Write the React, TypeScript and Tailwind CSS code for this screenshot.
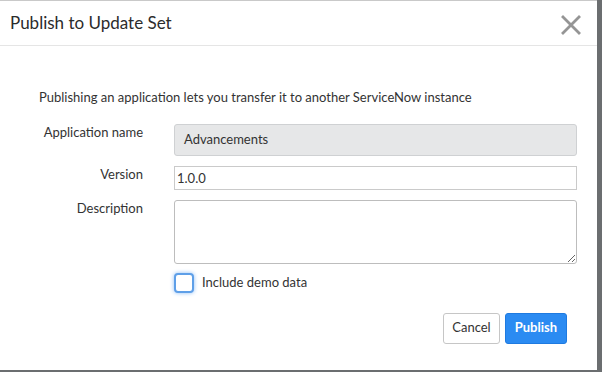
import { useState } from 'react';

export default function App() {
  const [demo, setDemo] = useState(false);

  return (
    <div className="w-[602px] h-[372px] bg-[#6b6e70] font-['Lato',sans-serif] text-[#333]">
      <div className="w-[597px] h-[370px] bg-white border-t border-[#c9c9c9] flex flex-col">
        {/* Header */}
        <div className="h-[45px] flex items-center justify-between pl-[10px] pr-[16px] border-b border-[#e5e5e5]">
          <h1 className="text-[17px] text-[#2b2b2b]">Publish to Update Set</h1>
          <button className="text-[#959595] mt-[4px]">
            <svg width="20" height="20" viewBox="0 0 20 20">
              <path d="M2 2 L18 18 M18 2 L2 18" stroke="currentColor" strokeWidth="2.8" strokeLinecap="square" />
            </svg>
          </button>
        </div>

        {/* Body */}
        <div className="pl-[39px] pr-[20px] pt-[42px] text-[13px]">
          <p className="mb-[16px]">Publishing an application lets you transfer it to another ServiceNow instance</p>

          <div className="grid grid-cols-[104px_403px] gap-x-[31px] items-start">
            <label className="text-right leading-[16px]">Application name</label>
            <div className="h-[32px] bg-[#e6e7e8] border border-[#cfd1d3] rounded-[3px] px-[9px] flex items-center mb-[10px]">
              Advancements
            </div>

            <label className="text-right leading-[16px]">Version</label>
            <input
              defaultValue="1.0.0"
              className="h-[24px] border border-[#cacaca] px-[2px] outline-none mb-[10px] text-[13px]"
            />

            <label className="text-right leading-[16px]">Description</label>
            <textarea className="h-[64px] border border-[#bdbdbd] rounded-[3px] outline-none resize-y mb-[9px]" />

            <div />
            <label className="flex items-center gap-[8px] cursor-pointer">
              <input
                type="checkbox"
                checked={demo}
                onChange={() => setDemo(!demo)}
                className="appearance-none w-[20px] h-[20px] rounded-[4px] border-2 border-[#5e9fe8] shadow-[0_0_4px_#8dbdf5] bg-white"
              />
              <span>Include demo data</span>
            </label>
          </div>

          <div className="flex justify-end gap-[5px] mt-[20px] pr-[10px]">
            <button className="h-[31px] px-[8px] border border-[#c6c6c6] rounded-[3px] bg-white text-[#333]">Cancel</button>
            <button className="h-[31px] px-[9px] rounded-[3px] bg-[#2b8bf2] border border-[#1f7ae0] text-white font-bold">Publish</button>
          </div>
        </div>
      </div>
    </div>
  );
}
